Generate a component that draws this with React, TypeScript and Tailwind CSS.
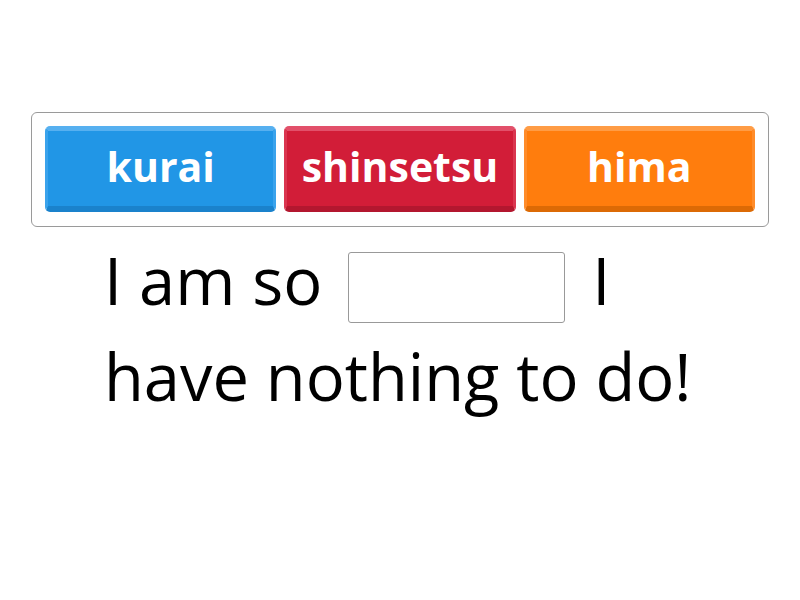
const words = [
  { label: "kurai", cls: "bg-[#2196e6] border-t-[#56b0f0] border-x-[#3aa3ec] border-b-[#1a82cc]" },
  { label: "shinsetsu", cls: "bg-[#d21d38] border-t-[#e2506a] border-x-[#da3650] border-b-[#b3172f]" },
  { label: "hima", cls: "bg-[#ff7d0d] border-t-[#ff9c45] border-x-[#ff8c2a] border-b-[#dc6a05]" },
]

const App = () => {
  return (
    <div className="w-[800px] h-[600px] bg-white font-['Open_Sans',sans-serif] pt-[112px]">
      <div className="mx-[31px] flex gap-2 rounded-md border border-[#9a9a9a] px-[13px] pt-[13px] pb-[14px]">
        {words.map((w) => (
          <div
            key={w.label}
            className={`flex flex-1 h-[86px] items-center justify-center rounded-[5px] border-t-[5px] border-x-[3px] border-b-[6px] pb-[5px] text-white font-bold text-[41px] leading-none ${w.cls}`}
          >
            {w.label}
          </div>
        ))}
      </div>
      <div className="pl-[104px] pr-[90px] text-[65px] leading-[96px] text-black mt-[5px]">
        I am so
        <span className="inline-block align-middle w-[217px] h-[71px] ml-[26px] mr-[10px] rounded-[3px] border border-[#999] bg-white" />{" "}
        I have nothing to do!
      </div>
    </div>
  )
}

export default App
